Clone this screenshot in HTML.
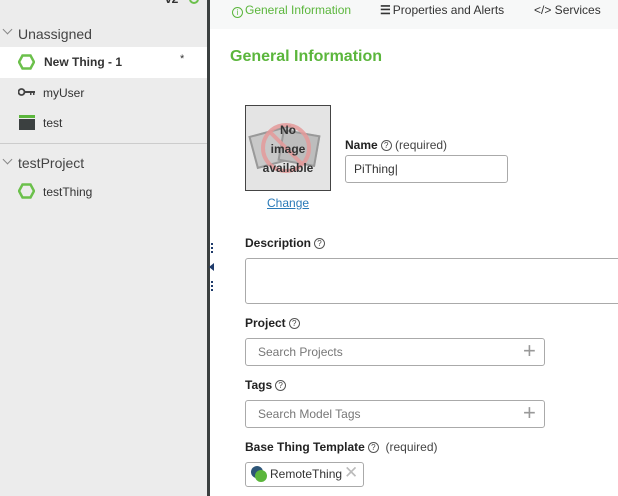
<!DOCTYPE html><html><head><style>
*{box-sizing:border-box;margin:0;padding:0}
body{width:618px;height:496px;overflow:hidden;position:relative;font-family:"Liberation Sans",sans-serif;background:#fff;color:#333}
.a{position:absolute}
.sb{left:0;top:0;width:207px;height:496px;background:#ececec}
.bar{left:207px;top:0;width:3px;height:496px;background:#3b4040}
.t{font-size:12px;color:#333}
.lbl{font-size:12px;font-weight:bold;color:#222}
.q{display:inline-block;width:11px;height:11px;border:1px solid #555;border-radius:50%;font-size:8px;text-align:center;line-height:10px;font-weight:normal;vertical-align:1px;margin-left:3px;color:#444}
.inp{border:1px solid #aaa;border-radius:3px;background:#fff}
.ph{font-size:12px;color:#777}
.plus{font-size:22px;color:#999;font-weight:300}
</style></head><body>
<div class="a sb"></div>
<div class="a" style="left:165px;top:-8px;font-size:12px;font-weight:bold">v2</div>
<div class="a" style="left:189px;top:-6px;width:10px;height:10px;border:2px solid #6bc04b;border-radius:50%"></div>
<div class="a" style="left:4px;top:26px;width:7px;height:7px;border-left:1px solid #888;border-bottom:1px solid #888;transform:rotate(-45deg)"></div>
<div class="a" style="left:18px;top:26px;font-size:14px;color:#444">Unassigned</div>
<div class="a" style="left:0;top:47px;width:207px;height:31px;background:#fff"></div>
<svg class="a" style="left:18px;top:54px" width="17" height="16"><polygon points="4.5,1.5 12.5,1.5 16,8 12.5,14.5 4.5,14.5 1,8" fill="none" stroke="#6bc04b" stroke-width="2.5"/></svg>
<div class="a" style="left:44px;top:55px;font-size:12px;font-weight:bold;color:#333">New Thing - 1</div>
<div class="a" style="left:180px;top:53px;font-size:11px">*</div>
<svg class="a" style="left:18px;top:88px" width="18" height="8"><circle cx="3.5" cy="4" r="3" fill="none" stroke="#444" stroke-width="1.8"/><rect x="6" y="3" width="11" height="2" fill="#444"/><rect x="12" y="5" width="1.5" height="2" fill="#444"/><rect x="15" y="5" width="1.5" height="2" fill="#444"/></svg>
<div class="a t" style="left:43px;top:86px">myUser</div>
<div class="a" style="left:19px;top:115px;width:16px;height:3px;background:#5bb63c"></div>
<div class="a" style="left:19px;top:119px;width:16px;height:11px;background:#3b4040"></div>
<div class="a t" style="left:43px;top:116px">test</div>
<div class="a" style="left:0;top:143px;width:207px;height:1px;background:#ccc"></div>
<div class="a" style="left:4px;top:156px;width:7px;height:7px;border-left:1px solid #888;border-bottom:1px solid #888;transform:rotate(-45deg)"></div>
<div class="a" style="left:18px;top:155px;font-size:14px;color:#444">testProject</div>
<svg class="a" style="left:18px;top:183px" width="17" height="16"><polygon points="4.5,1.5 12.5,1.5 16,8 12.5,14.5 4.5,14.5 1,8" fill="none" stroke="#6bc04b" stroke-width="2.5"/></svg>
<div class="a t" style="left:43px;top:185px">testThing</div>
<div class="a bar"></div>
<div class="a" style="left:210px;top:0;width:408px;height:29px;background:#f7f8f8"></div>
<div class="a" style="left:232px;top:3px;font-size:12px;color:#5bb63c"><span style="display:inline-block;width:11px;height:11px;border:1px solid #5bb63c;border-radius:50%;font-size:8px;text-align:center;line-height:10px;vertical-align:-1px;margin-right:2px">i</span>General Information</div>
<div class="a" style="left:380px;top:3px;font-size:12px;color:#333"><span style="font-weight:bold;margin-right:2px">☰</span>Properties and Alerts</div>
<div class="a" style="left:534px;top:3px;font-size:12px;color:#333">&lt;/&gt; Services</div>
<div class="a" style="left:230px;top:48px;font-size:16px;font-weight:bold;color:#5bb63c">General Information</div>
<div class="a" style="left:245px;top:105px;width:86px;height:86px;background:#e4e4e4;border:1px solid #444"></div>
<div class="a" style="left:252px;top:130px;width:44px;height:34px;background:#c8c8c8;border:2px solid #999;transform:rotate(-15deg)"></div>
<div class="a" style="left:280px;top:132px;width:38px;height:32px;background:#bdbdbd;border:2px solid #999;transform:rotate(10deg)"></div>
<div class="a" style="left:261px;top:123px;width:50px;height:50px;border:4px solid #e49a9a;border-radius:50%;opacity:.85"></div>
<div class="a" style="left:263px;top:146px;width:46px;height:4px;background:#e49a9a;transform:rotate(45deg);opacity:.85"></div>
<div class="a" style="left:245px;top:121px;width:86px;text-align:center;font-size:12px;font-weight:bold;line-height:19px;color:#333">No<br>image<br>available</div>
<div class="a" style="left:267px;top:196px;font-size:12px;color:#2a7ab8;text-decoration:underline">Change</div>
<div class="a lbl" style="left:345px;top:138px">Name<span class="q">?</span><span style="font-weight:normal;color:#444"> (required)</span></div>
<div class="a inp" style="left:345px;top:155px;width:163px;height:28px"></div>
<div class="a" style="left:354px;top:162px;font-size:12px">PiThing|</div>
<div class="a" style="left:211px;top:243px;width:2px;height:10px;border-left:2px dotted #1f3b6b"></div>
<div class="a" style="left:209px;top:263px;border-right:5px solid #1f3b6b;border-top:4px solid transparent;border-bottom:4px solid transparent"></div>
<div class="a" style="left:211px;top:281px;width:2px;height:10px;border-left:2px dotted #1f3b6b"></div>
<div class="a lbl" style="left:245px;top:236px">Description<span class="q">?</span></div>
<div class="a inp" style="left:245px;top:258px;width:380px;height:46px"></div>
<div class="a lbl" style="left:245px;top:316px">Project<span class="q">?</span></div>
<div class="a inp" style="left:245px;top:338px;width:300px;height:28px"></div>
<div class="a ph" style="left:258px;top:345px">Search Projects</div>
<div class="a plus" style="left:523px;top:338px">+</div>
<div class="a lbl" style="left:245px;top:378px">Tags<span class="q">?</span></div>
<div class="a inp" style="left:245px;top:400px;width:300px;height:28px"></div>
<div class="a ph" style="left:258px;top:407px">Search Model Tags</div>
<div class="a plus" style="left:523px;top:400px">+</div>
<div class="a lbl" style="left:245px;top:440px">Base Thing Template<span class="q">?</span><span style="font-weight:normal;color:#444">&nbsp; (required)</span></div>
<div class="a inp" style="left:245px;top:462px;width:119px;height:25px"></div>
<div class="a" style="left:251px;top:466px;width:12px;height:12px;border-radius:50%;background:#2d5577"></div>
<div class="a" style="left:255px;top:470px;width:12px;height:12px;border-radius:50%;background:#5bb63c"></div>
<div class="a" style="left:270px;top:467px;font-size:12px">RemoteThing</div>
<div class="a" style="left:344px;top:463px;font-size:17px;color:#bbb">✕</div>
</body></html>
